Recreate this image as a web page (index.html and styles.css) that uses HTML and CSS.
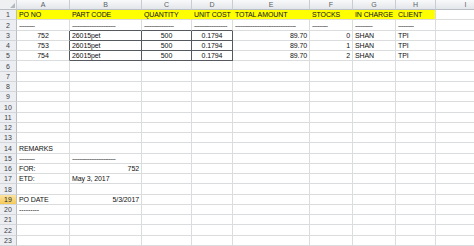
FILE: index.html
```html
<!DOCTYPE html>
<html>
<head>
<meta charset="utf-8">
<link rel="stylesheet" href="styles.css">
</head>
<body>
<table class="sheet">
<colgroup>
<col class="c-rh"><col class="c-a"><col class="c-b"><col class="c-c"><col class="c-d"><col class="c-e"><col class="c-f"><col class="c-g"><col class="c-h"><col class="c-i">
</colgroup>
<thead>
<tr><th class="corner"><svg width="8" height="8" viewBox="0 0 8 8"><path d="M7 2 L7 7 L2 7 Z" fill="#b4b9c0"/></svg></th><th>A</th><th>B</th><th>C</th><th>D</th><th>E</th><th>F</th><th>G</th><th>H</th><th>I</th></tr>
</thead>
<tbody>
<tr><th>1</th><td class="y">PO NO</td><td class="y">PART CODE</td><td class="y">QUANTITY</td><td class="y">UNIT COST</td><td class="y">TOTAL AMOUNT</td><td class="y">STOCKS</td><td class="y">IN CHARGE</td><td class="y ye">CLIENT</td><td></td></tr>
<tr><th>2</th><td class="ln">---------</td><td class="bt ln">-------------------------</td><td class="bt ln">-----------------</td><td class="bt ln">-------------------</td><td class="ln">-----------------------------------</td><td class="ln">---------</td><td class="ln">----------</td><td class="ln">---------</td><td></td></tr>
<tr><th>3</th><td class="ctr bl">752</td><td class="bx">26015pet</td><td class="bx ctr">500</td><td class="bx ctr">0.1794</td><td class="r">89.70</td><td class="r">0</td><td>SHAN</td><td>TPI</td><td></td></tr>
<tr><th>4</th><td class="ctr bl">753</td><td class="bx">26015pet</td><td class="bx ctr">500</td><td class="bx ctr">0.1794</td><td class="r">89.70</td><td class="r">1</td><td>SHAN</td><td>TPI</td><td></td></tr>
<tr><th>5</th><td class="ctr bl">754</td><td class="bx">26015pet</td><td class="bx ctr">500</td><td class="bx ctr">0.1794</td><td class="r">89.70</td><td class="r">2</td><td>SHAN</td><td>TPI</td><td></td></tr>
<tr><th>6</th><td></td><td></td><td></td><td></td><td></td><td></td><td></td><td></td><td></td></tr>
<tr><th>7</th><td></td><td></td><td></td><td></td><td></td><td></td><td></td><td></td><td></td></tr>
<tr><th>8</th><td></td><td></td><td></td><td></td><td></td><td></td><td></td><td></td><td></td></tr>
<tr><th>9</th><td></td><td></td><td></td><td></td><td></td><td></td><td></td><td></td><td></td></tr>
<tr><th>10</th><td></td><td></td><td></td><td></td><td></td><td></td><td></td><td></td><td></td></tr>
<tr><th>11</th><td></td><td></td><td></td><td></td><td></td><td></td><td></td><td></td><td></td></tr>
<tr><th>12</th><td></td><td></td><td></td><td></td><td></td><td></td><td></td><td></td><td></td></tr>
<tr><th>13</th><td></td><td></td><td></td><td></td><td></td><td></td><td></td><td></td><td></td></tr>
<tr><th>14</th><td>REMARKS</td><td></td><td></td><td></td><td></td><td></td><td></td><td></td><td></td></tr>
<tr><th>15</th><td class="ln">---------</td><td class="ln">-------------------------</td><td></td><td></td><td></td><td></td><td></td><td></td><td></td></tr>
<tr><th>16</th><td>FOR:</td><td class="r">752</td><td></td><td></td><td></td><td></td><td></td><td></td><td></td></tr>
<tr><th>17</th><td>ETD:</td><td>May 3, 2017</td><td></td><td></td><td></td><td></td><td></td><td></td><td></td></tr>
<tr><th>18</th><td></td><td></td><td></td><td></td><td></td><td></td><td></td><td></td><td></td></tr>
<tr><th class="sel">19</th><td>PO DATE</td><td class="r">5/3/2017</td><td></td><td></td><td></td><td></td><td></td><td></td><td></td></tr>
<tr><th>20</th><td>---------</td><td></td><td></td><td></td><td></td><td></td><td></td><td></td><td></td></tr>
<tr><th>21</th><td></td><td></td><td></td><td></td><td></td><td></td><td></td><td></td><td></td></tr>
<tr><th>22</th><td></td><td></td><td></td><td></td><td></td><td></td><td></td><td></td><td></td></tr>
<tr><th>23</th><td></td><td></td><td></td><td></td><td></td><td></td><td></td><td></td><td></td></tr>
</tbody>
</table>
</body>
</html>
```
FILE: styles.css
```css
html, body {
  margin: 0;
  padding: 0;
  background: #ffffff;
  overflow: hidden;
}

.sheet {
  table-layout: fixed;
  width: 496px;
  border-collapse: separate;
  border-spacing: 0;
  font-family: "Liberation Sans", Arial, sans-serif;
  font-size: 7px;
  letter-spacing: -0.1px;
  color: #111;
}

.c-rh { width: 17px; }
.c-a { width: 53px; }
.c-b { width: 72px; }
.c-c { width: 50px; }
.c-d { width: 41px; }
.c-e { width: 77px; }
.c-f { width: 43px; }
.c-g { width: 43px; }
.c-h { width: 40px; }
.c-i { width: 60px; }

thead tr { height: 10px; }
tbody tr { height: 10.26px; }

thead th {
  background: linear-gradient(#f8f9fa, #e3e6ea);
  border-right: 1px solid #c9cdd3;
  border-bottom: 1px solid #b9bec6;
  color: #5a5f66;
  font-weight: normal;
  font-size: 7px;
  letter-spacing: 0;
  line-height: 9px;
  padding: 0;
  text-align: center;
  vertical-align: middle;
}

thead th.corner {
  background: #eef0f2;
  text-align: right;
  vertical-align: bottom;
}

thead th.corner svg { display: block; margin-left: auto; }

tbody th {
  background: #eceef1;
  border-right: 1px solid #b9bec6;
  border-bottom: 1px solid #d3d7dc;
  color: #3d4148;
  font-weight: normal;
  font-size: 7px;
  letter-spacing: 0;
  line-height: 9px;
  padding: 0;
  text-align: center;
  vertical-align: bottom;
}

tbody th.sel {
  background: linear-gradient(#fbe3a1, #f5c959);
  color: #2a2a2a;
}

td {
  border-right: 1px solid #dadcdd;
  border-bottom: 1px solid #dadcdd;
  padding: 0 2px;
  line-height: 9px;
  vertical-align: bottom;
  white-space: nowrap;
  overflow: hidden;
  text-align: left;
}

td.ln { letter-spacing: -0.6px; color: #333; }

td.y {
  background: #ffff00;
  border-right-color: #ffff00;
}

td.ye { border-right-color: #dadcdd; }

td.r { text-align: right; }
td.ctr { text-align: center; }

td.bx {
  border-right-color: #555a60;
  border-bottom-color: #555a60;
}

td.bl { border-right-color: #555a60; }
td.bt { border-bottom-color: #555a60; }
```
